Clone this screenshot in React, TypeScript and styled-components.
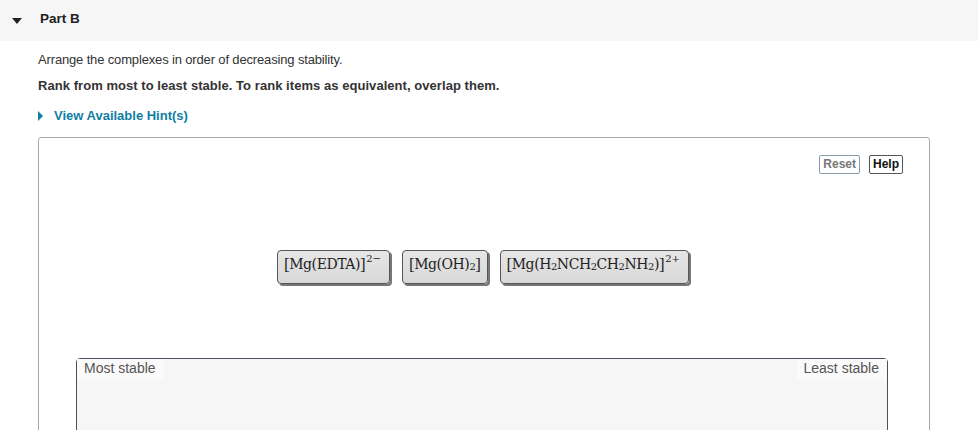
import React from "react";
import styled, { createGlobalStyle } from "styled-components";

const Global = createGlobalStyle`
  html, body { margin: 0; padding: 0; background: #fff; }
  body { font-family: "Liberation Sans", Arial, sans-serif; color: #333; }
`;

const Page = styled.div`
  width: 978px;
  height: 430px;
  overflow: hidden;
`;

const Header = styled.div`
  height: 41px;
  background: #f6f6f6;
  display: flex;
  align-items: center;
  padding-left: 12px;
  gap: 18px;
`;

const DownTri = styled.span`
  width: 0;
  height: 0;
  border-left: 5px solid transparent;
  border-right: 5px solid transparent;
  border-top: 6px solid #222;
  margin-top: 1px;
`;

const Title = styled.span`
  font-weight: bold;
  font-size: 13.5px;
  color: #222;
  margin-top: -4px;
`;

const Body = styled.div`
  padding: 12px 49px 0 38px;
`;

const Para = styled.p<{ $bold?: boolean }>`
  margin: 0 0 12px 0;
  font-size: 13px;
  line-height: 14px;
  font-weight: ${(p) => (p.$bold ? "bold" : "normal")};
  color: #333;
  letter-spacing: ${(p) => (p.$bold ? "0.05px" : "-0.15px")};
`;

const Hint = styled.div`
  display: flex;
  align-items: center;
  gap: 11px;
  margin-top: 16px;
  color: #0f7ea3;
  font-weight: bold;
  font-size: 13px;
  line-height: 14px;
`;

const RightTri = styled.span`
  width: 0;
  height: 0;
  border-top: 5px solid transparent;
  border-bottom: 5px solid transparent;
  border-left: 5px solid #0f7ea3;
`;

const Panel = styled.div`
  margin-top: 14px;
  width: 890px;
  height: 320px;
  border: 1px solid #a8a8a8;
  border-radius: 3px;
  box-sizing: content-box;
  padding-top: 17px;
`;

const ToolRow = styled.div`
  display: flex;
  justify-content: flex-end;
  gap: 9px;
  padding-right: 26px;
`;

const ToolButton = styled.button<{ $muted?: boolean }>`
  font-family: "Liberation Sans", Arial, sans-serif;
  font-size: 12px;
  font-weight: bold;
  color: ${(p) => (p.$muted ? "#777" : "#111")};
  background: #fff;
  border: 1px solid ${(p) => (p.$muted ? "#8a9aa6" : "#555")};
  border-radius: 2px;
  height: 19px;
  padding: 0 3px;
  line-height: 17px;
`;

const ItemRow = styled.div`
  display: flex;
  justify-content: center;
  gap: 12px;
  margin-top: 76px;
  padding-right: 2px;
`;

const Item = styled.div`
  height: 34px;
  box-sizing: border-box;
  border: 1px solid #555;
  border-radius: 4px;
  background: linear-gradient(#e6e6e6, #d8d8d8);
  box-shadow: 2px 2px 0 #777;
  display: flex;
  align-items: flex-start;
  padding: 5px 6px 0 6px;
  font-family: "DejaVu Serif", "Liberation Serif", serif;
  font-size: 14px;
  color: #222;
  white-space: nowrap;
  letter-spacing: -0.45px;
`;

const Sup = styled.span`
  font-size: 10px;
  position: relative;
  top: -3px;
  margin-left: 1px;
  margin-right: 2px;
  letter-spacing: 0;
`;

const Sub = styled.span`
  font-size: 10px;
  position: relative;
  top: 5px;
`;

const Br = styled.span`
  font-size: 17px;
  line-height: 18px;
  font-family: "Liberation Serif", serif;
`;

const Target = styled.div`
  margin: 74px 0 0 37px;
  width: 810px;
  height: 100px;
  border: 1px solid #4e4c62;
  border-radius: 4px;
  background: #f6f6f6;
  display: flex;
  justify-content: space-between;
  align-items: flex-start;
`;

const TargetLabel = styled.span`
  font-size: 14px;
  color: #555;
  background: #fafafa;
  padding: 2px 8px 3px 7px;
  line-height: 15px;
`;

export default function App() {
  return (
    <Page>
      <Global />
      <Header>
        <DownTri />
        <Title>Part B</Title>
      </Header>
      <Body>
        <Para>Arrange the complexes in order of decreasing stability.</Para>
        <Para $bold>Rank from most to least stable. To rank items as equivalent, overlap them.</Para>
        <Hint>
          <RightTri />
          <span>View Available Hint(s)</span>
        </Hint>
        <Panel>
          <ToolRow>
            <ToolButton $muted>Reset</ToolButton>
            <ToolButton>Help</ToolButton>
          </ToolRow>
          <ItemRow>
            <Item>
              <Br>[</Br>Mg(EDTA)<Br>]</Br>
              <Sup>2−</Sup>
            </Item>
            <Item>
              <Br>[</Br>Mg(OH)<Sub>2</Sub>
              <Br>]</Br>
            </Item>
            <Item>
              <Br>[</Br>Mg(H<Sub>2</Sub>NCH<Sub>2</Sub>CH<Sub>2</Sub>NH<Sub>2</Sub>)<Br>]</Br>
              <Sup>2+</Sup>
            </Item>
          </ItemRow>
          <Target>
            <TargetLabel>Most stable</TargetLabel>
            <TargetLabel>Least stable</TargetLabel>
          </Target>
        </Panel>
      </Body>
    </Page>
  );
}
